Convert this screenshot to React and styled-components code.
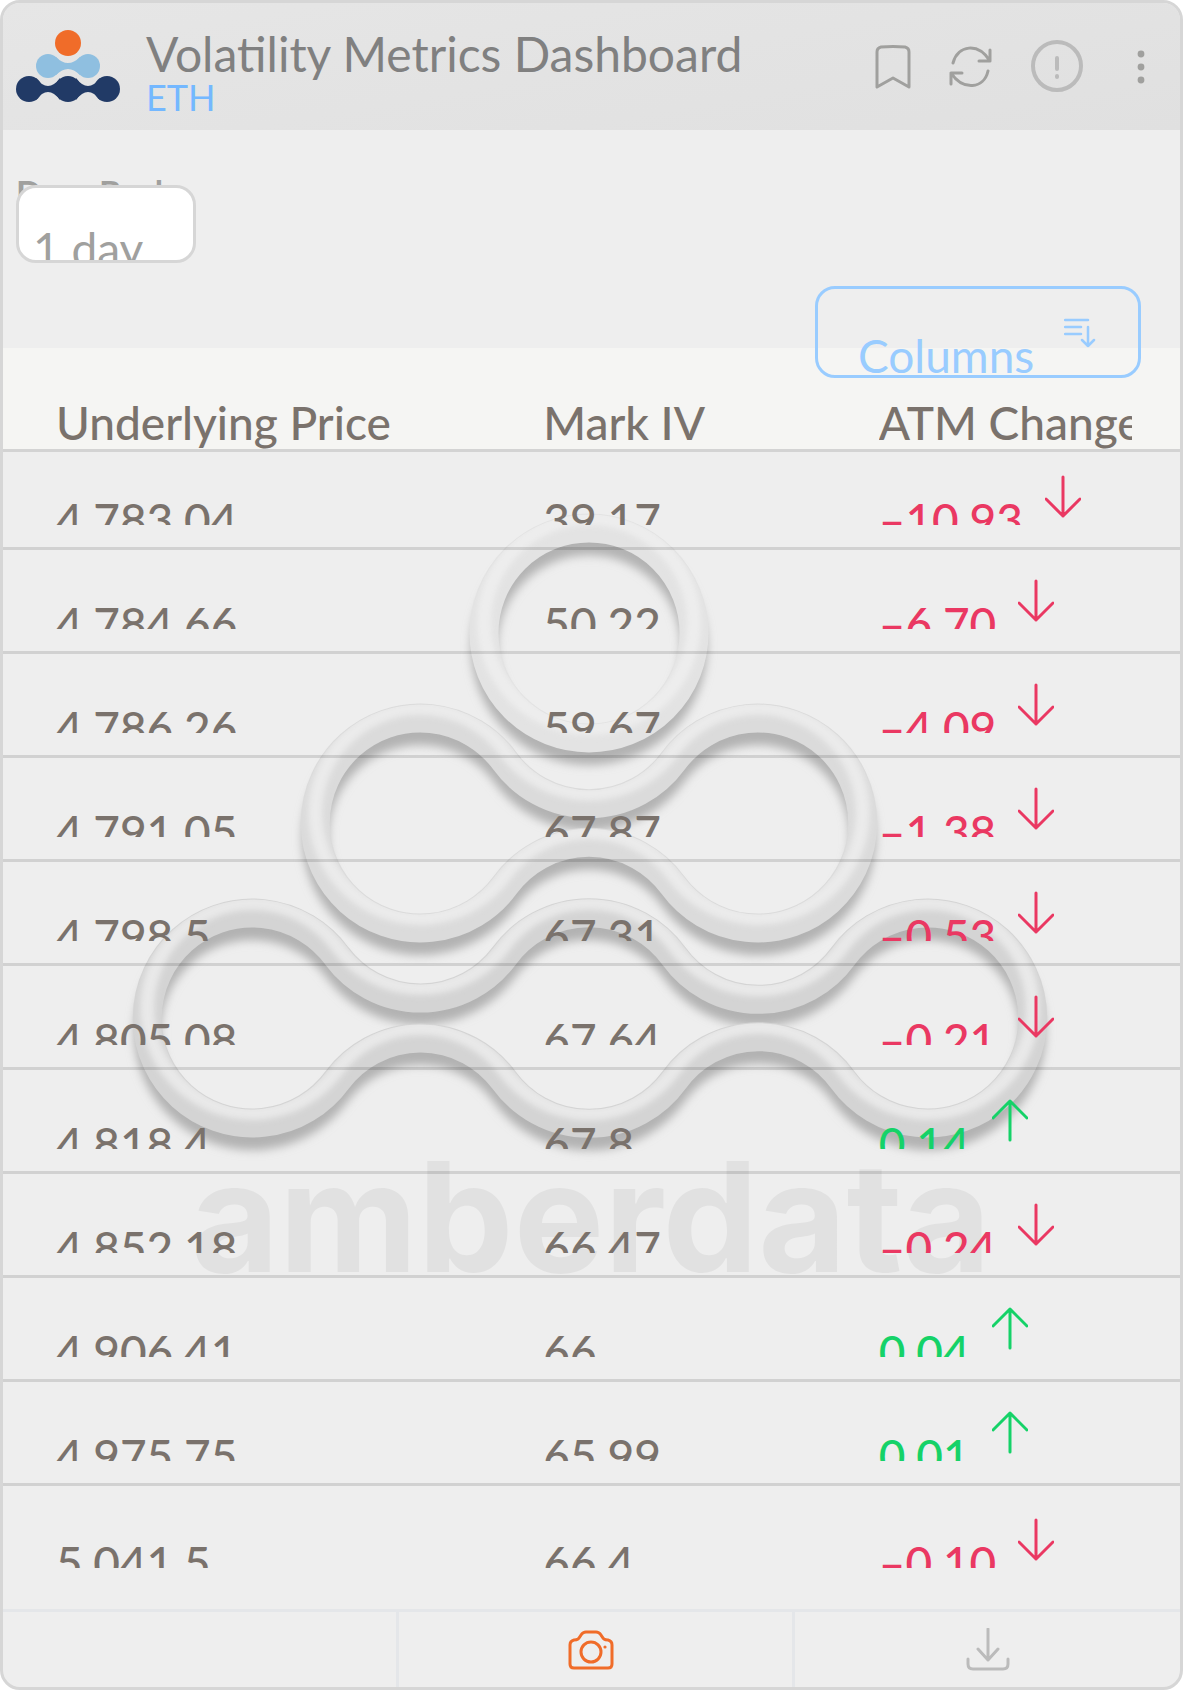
import { useState } from "react";
import styled, { createGlobalStyle } from "styled-components";

const rows = [
	{ price: "4,783.04", iv: "39.17", change: "-10.93" },
	{ price: "4,784.66", iv: "50.22", change: "-6.70" },
	{ price: "4,786.26", iv: "59.67", change: "-4.09" },
	{ price: "4,791.05", iv: "67.87", change: "-1.38" },
	{ price: "4,798.5", iv: "67.31", change: "-0.53" },
	{ price: "4,805.08", iv: "67.64", change: "-0.21" },
	{ price: "4,818.4", iv: "67.8", change: "0.14" },
	{ price: "4,852.18", iv: "66.47", change: "-0.24" },
	{ price: "4,906.41", iv: "66", change: "0.04" },
	{ price: "4,975.75", iv: "65.99", change: "0.01" },
	{ price: "5,041.5", iv: "66.4", change: "-0.10" },
];

const RING = "M589 528a105 105 0 1 1 0 210a105 105 0 1 1 0 -210Z";
const PAIR =
	"M505 761A104 104 0 0 0 673 761A105 105 0 1 1 673 885A104 104 0 0 0 505 885A105 105 0 1 1 505 761Z";
const TRIPLE =
	"M337 956A104 104 0 0 0 504 956A105 105 0 0 1 674 956A104 104 0 0 0 843 956A105 105 0 1 1 843 1080A104 104 0 0 0 674 1080A105 105 0 0 1 504 1080A104 104 0 0 0 337 1080A105 105 0 1 1 337 956Z";

function Tube({ id, d, color }) {
	return (
		<g fill="none">
			<mask id={id} maskUnits="userSpaceOnUse" x="100" y="480" width="980" height="700">
				<path d={d} stroke="#fff" strokeWidth="27" />
			</mask>
			<path
				d={d}
				stroke="#a8a8a8"
				strokeOpacity="0.85"
				strokeWidth="26"
				transform="translate(0 14)"
				filter="url(#soft)"
			/>
			<path d={d} stroke={color} strokeWidth="29" />
			<g mask={`url(#${id})`}>
				<path
					d={d}
					stroke="#f2f2f2"
					strokeOpacity="0.7"
					strokeWidth="14"
					transform="translate(0 -10)"
					filter="url(#glow)"
				/>
			</g>
		</g>
	);
}

function Watermark() {
	return (
		<Backdrop viewBox="0 480 1177 820" aria-hidden="true">
			<filter id="soft" filterUnits="userSpaceOnUse" x="80" y="460" width="1020" height="740">
				<feGaussianBlur stdDeviation="5" />
			</filter>
			<filter id="glow" filterUnits="userSpaceOnUse" x="80" y="460" width="1020" height="740">
				<feGaussianBlur stdDeviation="3" />
			</filter>
			<g transform="translate(-3 0)">
				<Tube id="ring" d={RING} color="#e3e3e3" />
				<Tube id="pair" d={PAIR} color="#dbdbdb" />
				<Tube id="triple" d={TRIPLE} color="#d4d4d4" />
				<Brand x="591" y="1272" textAnchor="middle">
					amberdata
				</Brand>
			</g>
		</Backdrop>
	);
}

function Logo() {
	return (
		<svg width="104" height="76" viewBox="0 0 104 76" role="img" aria-label="Amberdata">
			<circle cx="52" cy="14" r="13" fill="#f06c29" />
			<g fill="#8fbfe0">
				<circle cx="32" cy="37" r="12" />
				<circle cx="72" cy="37" r="12" />
				<path d="M40 28Q52 40 64 28V46Q52 34 40 46Z" />
			</g>
			<g fill="#213a66">
				<circle cx="13" cy="60" r="13" />
				<circle cx="52" cy="60" r="13" />
				<circle cx="91" cy="60" r="13" />
				<path d="M20 49Q32 65 44 49V71Q32 55 20 71Z" />
				<path d="M60 49Q72 65 84 49V71Q72 55 60 71Z" />
			</g>
		</svg>
	);
}

function Arrow({ up }) {
	return (
		<svg
			width="36"
			height="43"
			viewBox="0 0 36 43"
			fill="none"
			stroke="currentColor"
			strokeWidth="3"
			strokeLinecap="round"
			strokeLinejoin="round">
			{up ? <path d="M18 41V2M1 19L18 2L35 19" /> : <path d="M18 2V41M1 24L18 41L35 24" />}
		</svg>
	);
}

export default function App() {
	const [days, setDays] = useState("1 day");

	return (
		<>
			<GlobalStyle />
			<Panel>
				<Header>
					<Logo />
					<Titles>
						<h1>Volatility Metrics Dashboard</h1>
						<h2>ETH</h2>
					</Titles>
					<Actions>
						<IconButton aria-label="Bookmark">
							<svg width="36" height="44" viewBox="0 0 36 44" fill="none" stroke="currentColor" strokeWidth="3" strokeLinejoin="round">
								<path d="M2 42V7Q2 3 6 2Q18 1 30 2Q34 3 34 7V42L18 33Z" />
							</svg>
						</IconButton>
						<IconButton aria-label="Refresh">
							<svg width="44" height="44" viewBox="0 0 44 44" fill="none" stroke="currentColor" strokeWidth="3" strokeLinecap="round" strokeLinejoin="round">
								<path d="M4 18C9 0 29 -3 41 16M41 5V16H30" />
								<path d="M39 26C35 44 14 46 2 28M2 39V28H13" />
							</svg>
						</IconButton>
						<IconButton aria-label="Information" $light>
							<svg width="53" height="53" viewBox="0 0 53 53" fill="none" stroke="currentColor" strokeWidth="4" strokeLinecap="round">
								<circle cx="26" cy="26" r="24" />
								<path d="M26 18V29M26 36V37" />
							</svg>
						</IconButton>
						<IconButton aria-label="More options">
							<svg width="38" height="34" viewBox="0 0 38 34" fill="currentColor">
								<circle cx="19" cy="4" r="3.4" />
								<circle cx="19" cy="17" r="3.4" />
								<circle cx="19" cy="30" r="3.4" />
							</svg>
						</IconButton>
					</Actions>
				</Header>
				<Toolbar>
					<Field>
						<label htmlFor="days">Days Back</label>
						<SelectBox>
							<select id="days" value={days} onChange={(e) => setDays(e.target.value)}>
								<option>1 day</option>
								<option>7 days</option>
								<option>30 days</option>
							</select>
						</SelectBox>
					</Field>
					<ColumnsButton>
						<span>Columns</span>
						<svg width="34" height="34" viewBox="0 0 34 34" fill="none" stroke="currentColor" strokeWidth="2.5" strokeLinecap="round" strokeLinejoin="round">
							<path d="M1 3H24M1 10H17M1 17H17M24 10V29M18 23L24 29L30 23" />
						</svg>
					</ColumnsButton>
				</Toolbar>
				<Watermark />
				<Table>
					<thead>
						<tr>
							<Head $width="41.4%">
								<span>Underlying Price</span>
							</Head>
							<Head $width="28.5%">
								<span>Mark IV</span>
							</Head>
							<Head>
								<span>ATM Change</span>
							</Head>
						</tr>
					</thead>
					<tbody>
						{rows.map((row) => {
							const up = !row.change.startsWith("-");
							return (
								<Row key={row.price}>
									<td>
										<Value>{row.price}</Value>
									</td>
									<td>
										<Value>{row.iv}</Value>
									</td>
									<td>
										<Change $up={up}>
											<Value>{row.change.replace("-", "–")}</Value>
											<Arrow up={up} />
										</Change>
									</td>
								</Row>
							);
						})}
					</tbody>
				</Table>
				<Footer>
					<FooterCell />
					<FooterCell $accent>
						<button aria-label="Take a snapshot">
							<svg width="48" height="42" viewBox="0 0 48 42" fill="none" stroke="currentColor" strokeWidth="3" strokeLinejoin="round">
								<path d="M7 11C12 11 12 9 14 6Q16 3 19 3H29Q32 3 34 6C36 9 36 11 41 11Q45 12 45 16V35Q45 39 41 39H7Q3 39 3 35V16Q3 12 7 11Z" />
								<circle cx="24" cy="23" r="10" />
								<circle cx="38" cy="18" r="1.6" fill="currentColor" stroke="none" />
							</svg>
						</button>
					</FooterCell>
					<FooterCell>
						<button aria-label="Download">
							<svg width="44" height="44" viewBox="0 0 44 44" fill="none" stroke="currentColor" strokeWidth="3" strokeLinecap="round" strokeLinejoin="round">
								<path d="M22 1V32M12 21L22 32L32 21M2 31V36Q2 41 7 41H37Q42 41 42 36V31" />
							</svg>
						</button>
					</FooterCell>
				</Footer>
			</Panel>
		</>
	);
}

const GlobalStyle = createGlobalStyle`
	* {
		box-sizing: border-box;
	}
	body {
		margin: 0;
		background: #ffffff;
		font-family: Lato, "Open Sans", sans-serif;
	}
	button, select {
		font-family: inherit;
		border: 0;
		padding: 0;
		background: none;
		cursor: pointer;
	}
	svg {
		display: block;
		flex-shrink: 0;
	}
`;
const Panel = styled.main`
	position: relative;
	isolation: isolate;
	display: flex;
	flex-direction: column;
	min-height: 100vh;
	overflow: hidden;
	background: #eeeeee;
	border: 3px solid #d6d6d6;
	border-radius: 20px;
`;
const Header = styled.header`
	display: flex;
	align-items: center;
	height: 127px;
	padding: 0 20px 0 13px;
	background: linear-gradient(170deg, #e6e6e6, #e0e0e0);
`;
const Titles = styled.div`
	display: flex;
	flex-direction: column;
	margin-left: 26px;
	padding-top: 12px;
	h1 {
		margin: 0;
		font-weight: 400;
		font-size: 48px;
		line-height: 48px;
		color: #808080;
	}
	h2 {
		margin: 0;
		font-weight: 400;
		font-size: 36px;
		line-height: 38px;
		color: #74b8ff;
	}
`;
const Actions = styled.div`
	display: flex;
	align-items: center;
	margin-left: auto;
	gap: 38px;
`;
const IconButton = styled.button`
	color: ${({ $light }) => ($light ? "#bbbbbb" : "#a0a09e")};
`;
const Toolbar = styled.div`
	display: flex;
	justify-content: space-between;
	height: 218px;
	padding: 46px 39px 0 13px;
`;
const Field = styled.div`
	label {
		display: block;
		height: 9px;
		font-weight: 700;
		font-size: 34px;
		line-height: 34px;
		color: #a0a09e;
	}
`;
const SelectBox = styled.div`
	position: relative;
	width: 180px;
	height: 78px;
	overflow: hidden;
	background: #ffffff;
	border: 3px solid #d6d6d6;
	border-radius: 20px;
	select {
		appearance: none;
		width: 100%;
		height: 94px;
		padding: 28px 0 0 14px;
		font-size: 46px;
		line-height: 56px;
		color: #a0a09e;
	}
`;
const ColumnsButton = styled.button`
	position: relative;
	z-index: 1;
	display: flex;
	justify-content: space-between;
	align-items: flex-start;
	width: 326px;
	height: 92px;
	margin-top: 110px;
	padding: 28px 40px 0;
	font-size: 46px;
	color: #99ccff;
	border: 3px solid #99ccff;
	border-radius: 20px;
	span {
		line-height: 78px;
	}
`;
const Backdrop = styled.svg`
	position: absolute;
	z-index: -1;
	top: 477px;
	left: 0;
	width: 100%;
`;
const Brand = styled.text`
	font-family: Inter, sans-serif;
	font-weight: 700;
	font-size: 152px;
	fill: rgba(0, 0, 0, 0.05);
`;
const Table = styled.table`
	width: 100%;
	table-layout: fixed;
	border-spacing: 0;
	font-size: 46px;
	line-height: 58px;
	text-align: left;
	color: #7a726c;
`;
const Head = styled.th`
	width: ${({ $width }) => $width || "auto"};
	height: 104px;
	padding: 0 0 0 53px;
	vertical-align: bottom;
	font-weight: 500;
	background: #f5f5f3;
	border-bottom: 3px solid #d3d3d3;
	span {
		display: block;
		height: 55px;
		overflow: hidden;
		white-space: nowrap;
	}
	&:last-child {
		padding-right: 48px;
	}
`;
const Row = styled.tr`
	td {
		height: 104px;
		padding: 0 0 22px 53px;
		vertical-align: bottom;
		border-bottom: 3px solid rgba(0, 0, 0, 0.12);
	}
	&:first-child td {
		height: 98px;
	}
	&:last-child td {
		border-bottom: 0;
	}
`;
const Value = styled.span`
	display: block;
	height: 34px;
	overflow: hidden;
	white-space: nowrap;
	font-weight: 500;
`;
const Change = styled.div`
	display: flex;
	align-items: flex-end;
	gap: 22px;
	color: ${({ $up }) => ($up ? "#15d268" : "#ea3862")};
	svg {
		margin-bottom: 7px;
	}
`;
const Footer = styled.footer`
	display: grid;
	grid-template-columns: 34fr 34fr 33fr;
	height: 78px;
	margin-top: auto;
	border-top: 3px solid #e4e6e9;
`;
const FooterCell = styled.div`
	display: flex;
	justify-content: center;
	align-items: center;
	border-right: 3px solid #e4e6e9;
	padding-right: ${({ $accent }) => ($accent ? "10px" : "0")};
	button {
		color: ${({ $accent }) => ($accent ? "#f06c29" : "#bbbbbb")};
	}
	&:last-child {
		border-right: 0;
	}
`;
